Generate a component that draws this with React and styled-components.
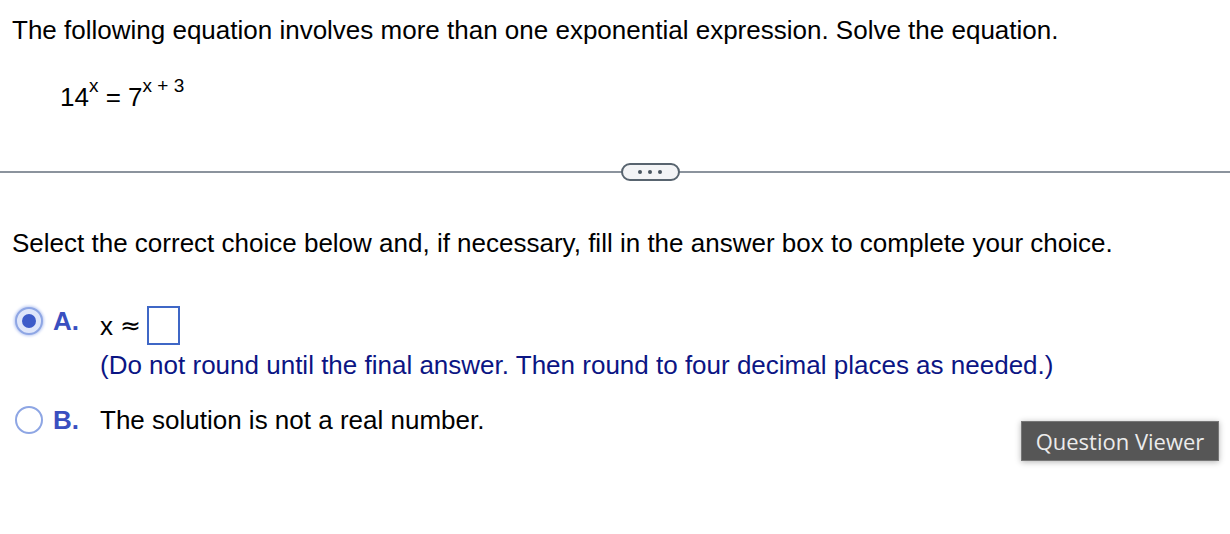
import styled, { createGlobalStyle } from "styled-components";

const GlobalStyle = createGlobalStyle`
  html, body {
    margin: 0;
    padding: 0;
    background: #ffffff;
    font-family: "Liberation Sans", Arial, sans-serif;
    color: #000;
  }
`;

const App = () => {
  return (
    <>
      <GlobalStyle />
      <Page>
        <Question>
          The following equation involves more than one exponential expression. Solve the equation.
        </Question>
        <Equation>
          14<Sup>x</Sup> = 7<Sup>x + 3</Sup>
        </Equation>
        <Divider>
          <Pill>
            <Dot />
            <Dot />
            <Dot />
          </Pill>
        </Divider>
        <Instruction>
          Select the correct choice below and, if necessary, fill in the answer box to complete your choice.
        </Instruction>
        <Choices>
          <Choice>
            <Radio checked />
            <Letter>A.</Letter>
            <ChoiceBody>
              <AnswerLine>
                x<Approx>≈</Approx>
                <AnswerBox />
              </AnswerLine>
              <Hint>
                (Do not round until the final answer. Then round to four decimal places as needed.)
              </Hint>
            </ChoiceBody>
          </Choice>
          <Choice>
            <Radio />
            <Letter>B.</Letter>
            <ChoiceBody>
              <ChoiceText>The solution is not a real number.</ChoiceText>
            </ChoiceBody>
          </Choice>
        </Choices>
        <ViewerButton>Question Viewer</ViewerButton>
      </Page>
    </>
  );
};

const Page = styled.div`
  position: relative;
  width: 1230px;
  height: 534px;
  overflow: hidden;
`;

const Question = styled.p`
  margin: 0;
  padding: 15px 0 0 12px;
  font-size: 26px;
  line-height: 30px;
`;

const Equation = styled.div`
  padding: 37px 0 0 60px;
  font-size: 26px;
  line-height: 30px;
`;

const Sup = styled.sup`
  font-size: 19px;
  vertical-align: 14px;
  line-height: 0;
`;

const Divider = styled.div`
  margin-top: 59px;
  height: 2px;
  background: #8b939d;
  display: flex;
  justify-content: center;
  align-items: center;
`;

const Pill = styled.div`
  width: 55px;
  height: 14px;
  margin-left: 70px;
  border: 2px solid #58646f;
  border-radius: 9px;
  background: #f3f4f6;
  display: flex;
  justify-content: center;
  align-items: center;
  gap: 6px;
`;

const Dot = styled.span`
  width: 4px;
  height: 4px;
  border-radius: 50%;
  background: #4a5560;
`;

const Instruction = styled.p`
  margin: 0;
  padding: 55px 0 0 12px;
  font-size: 26px;
  line-height: 30px;
`;

const Choices = styled.div`
  padding: 49px 0 0 15px;
  display: flex;
  flex-direction: column;
  gap: 26px;
`;

const Choice = styled.div`
  display: flex;
  align-items: flex-start;
`;

const Radio = styled.span`
  flex: none;
  box-sizing: border-box;
  width: 28px;
  height: 28px;
  border-radius: 50%;
  border: 2px solid #8ea6e4;
  background: ${(p) => (p.checked ? "#dfe6fa" : "#fff")};
  box-shadow: ${(p) => (p.checked ? "0 0 3px 1px #b9c8f2" : "none")};
  display: flex;
  justify-content: center;
  align-items: center;

  &::after {
    content: "";
    display: ${(p) => (p.checked ? "block" : "none")};
    width: 14px;
    height: 14px;
    border-radius: 50%;
    background: #3d5bc9;
  }
`;

const Letter = styled.span`
  width: 47px;
  padding-left: 10px;
  font-size: 26px;
  line-height: 28px;
  font-weight: bold;
  color: #3a4fc0;
`;

const ChoiceBody = styled.div`
  display: flex;
  flex-direction: column;
`;

const AnswerLine = styled.div`
  display: flex;
  align-items: center;
  font-size: 26px;
  line-height: 30px;
  margin-top: -1px;
  height: 39px;
`;

const Approx = styled.span`
  font-family: "DejaVu Sans", sans-serif;
  font-size: 25px;
  margin: 0 6px 0 7px;
`;

const AnswerBox = styled.span`
  box-sizing: border-box;
  width: 33px;
  height: 39px;
  border: 2px solid #3f67c6;
  background: #fff;
`;

const Hint = styled.div`
  margin-top: 5px;
  font-size: 26px;
  line-height: 30px;
  color: #0b1584;
`;

const ChoiceText = styled.div`
  font-size: 26px;
  line-height: 28px;
`;

const ViewerButton = styled.div`
  position: absolute;
  left: 1021px;
  top: 421px;
  width: 198px;
  height: 40px;
  box-sizing: border-box;
  background: #565656;
  border: 1px solid #777;
  box-shadow: 0 1px 6px rgba(0, 0, 0, 0.3);
  color: #ececec;
  font-family: "Open Sans", "DejaVu Sans", sans-serif;
  font-size: 22px;
  display: flex;
  justify-content: center;
  align-items: center;
`;

export default App;
